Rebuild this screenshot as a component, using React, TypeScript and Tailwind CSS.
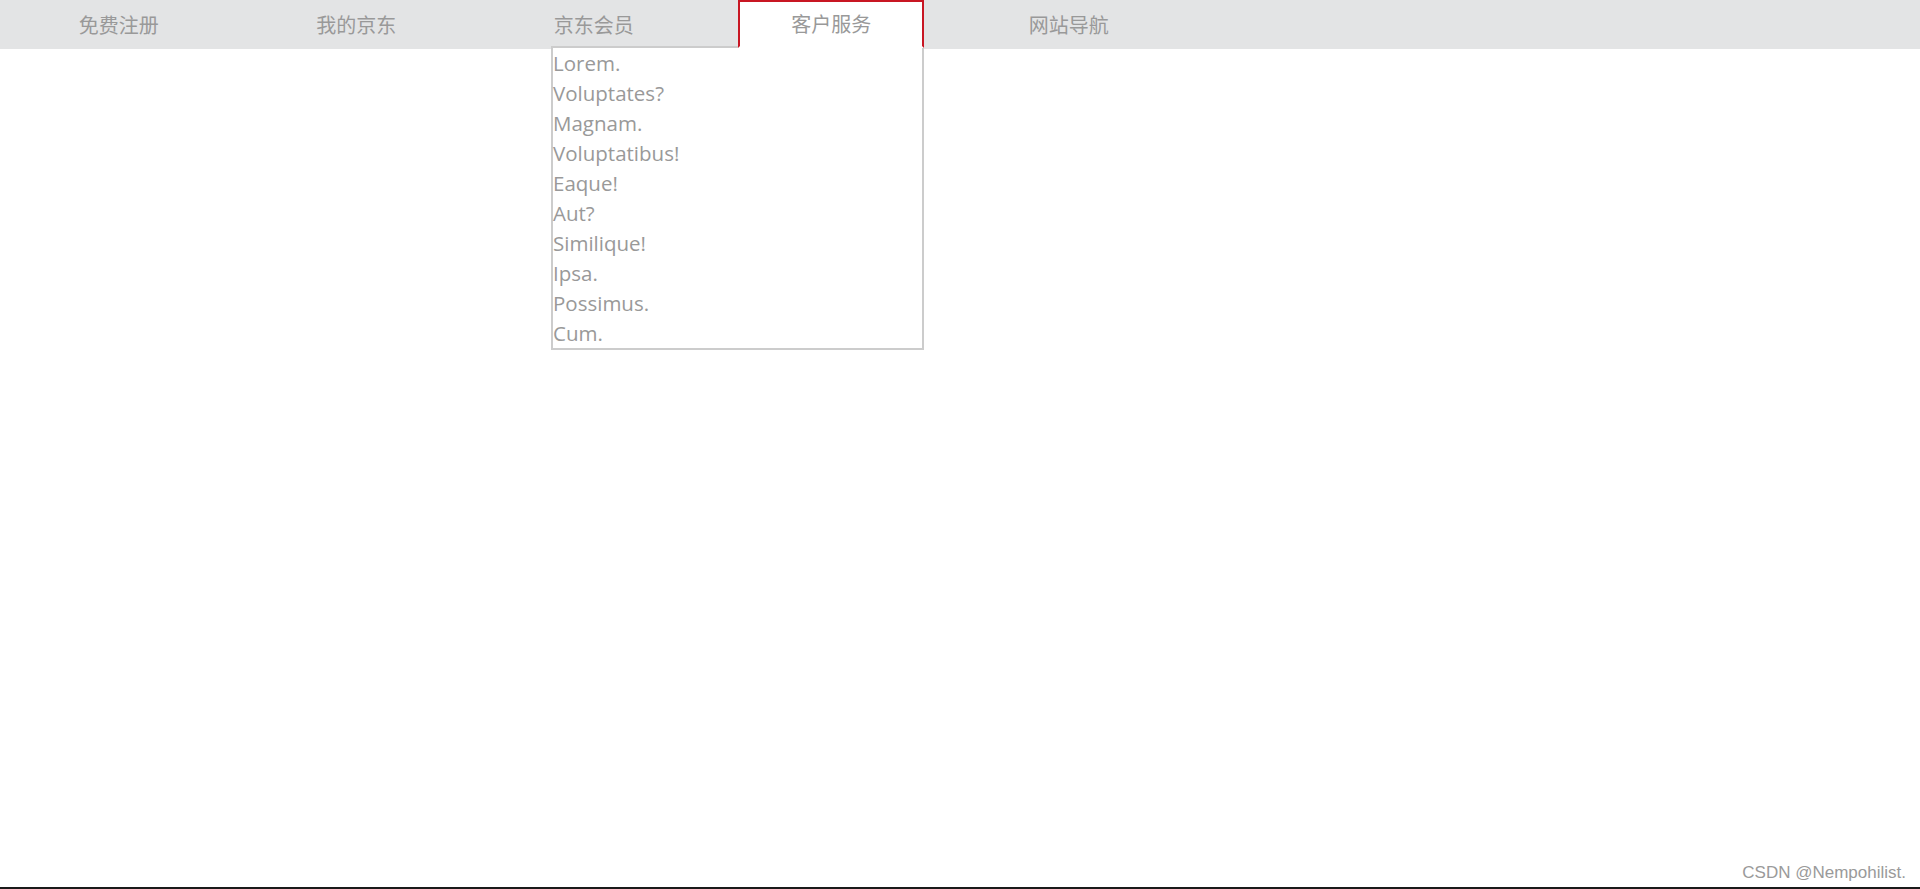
import React from 'react';

const navItems = ['免费注册', '我的京东', '京东会员', '客户服务', '网站导航'];

const menuItems = [
  'Lorem.',
  'Voluptates?',
  'Magnam.',
  'Voluptatibus!',
  'Eaque!',
  'Aut?',
  'Similique!',
  'Ipsa.',
  'Possimus.',
  'Cum.',
];

const ACTIVE = 3;

export default function App() {
  return (
    <div className="h-[889px] flex flex-col bg-white border-b-2 border-[#1a1a1a]">
      {/* top nav */}
      <ul className="flex h-[49px] bg-[#e3e4e5]">
        {navItems.map((item, i) => (
          <li key={item} className="w-[237.5px] flex justify-center relative">
            {i === ACTIVE ? (
              <>
                <div className="relative z-10 w-[186px] h-[48px] bg-white border-2 border-[#c81623] border-b-white border-b-2 text-center leading-[44px] text-[20px] text-[#999] font-['Noto_Sans_CJK_SC',sans-serif]">
                  {item}
                </div>
                <div className="absolute top-[46px] right-[26px] w-[373px] bg-white border-2 border-[#cccccc]">
                  {menuItems.map((m) => (
                    <div
                      key={m}
                      className="h-[30px] leading-[30px] text-[20.5px] text-[#999] font-['Open_Sans',sans-serif]"
                    >
                      {m}
                    </div>
                  ))}
                </div>
              </>
            ) : (
              <span className="leading-[50px] text-[20px] text-[#999] font-['Noto_Sans_CJK_SC',sans-serif]">
                {item}
              </span>
            )}
          </li>
        ))}
      </ul>

      <div className="flex-1" />

      {/* watermark */}
      <div className="flex justify-end pr-[14px] pb-[2px]">
        <span className="text-[17px] text-[#9a9a9a] font-['Liberation_Sans',sans-serif]">
          CSDN @Nempohilist.
        </span>
      </div>
    </div>
  );
}
